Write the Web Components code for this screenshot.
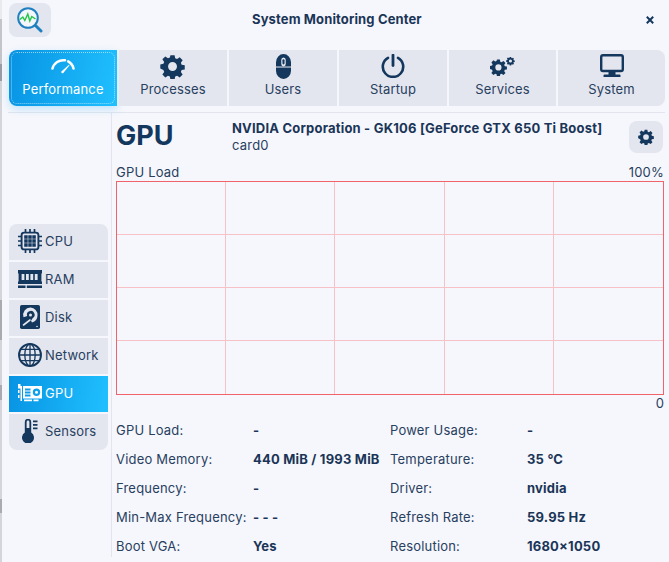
<!DOCTYPE html>
<html>
<head>
<meta charset="utf-8">
<title>System Monitoring Center</title>
<style>
html, body { margin: 0; padding: 0; height: 562px; overflow: hidden; background: #f6f7fc; }
body { font-family: Inter, "Liberation Sans", sans-serif; color: #1a3557; }
</style>
</head>
<body>
<app-window></app-window>
<script>
const COG = "M9.800 0h4.400l.6 3.300 2 .8 2.800-1.900 3.100 3.100-1.900 2.800.8 2 3.300.6v4.400l-3.300.6-.8 2 1.900 2.800-3.100 3.100-2.800-1.900-2 .8-.6 3.300H9.800l-.6-3.300-2-.8-2.800 1.900-3.100-3.100 1.900-2.800-.8-2L-.9 14.200V9.800l3.300-.6.8-2L1.300 4.400l3.100-3.100 2.800 1.900 2-.8zM12 7.300a4.700 4.700 0 1 0 0 9.400 4.700 4.700 0 0 0 0-9.400z";
const ICONS = {
  perf: `<svg viewBox="0 0 24 16" width="24" height="16"><path d="M1.500 10.500A11 11 0 0 1 14 2.300M17.200 3.400A11 11 0 0 1 22.500 10.500" fill="none" stroke="#fff" stroke-width="2.500" stroke-linecap="round"/><path d="M10.300 13.500l7.700-6.800.6.600-6.500 8a1.500 1.500 0 0 1-1.800-1.800z" fill="#fff"/></svg>`,
  gear: `<svg viewBox="0 0 24 24" width="25" height="25"><path fill="#14375d" fill-rule="evenodd" d="${COG}" transform="translate(1.100 1.100) scale(.91)"/></svg>`,
  mouse: `<svg viewBox="0 0 16 24" width="15" height="25" preserveAspectRatio="none"><path fill="#14375d" fill-rule="evenodd" d="M8 0a8 8 0 0 1 8 8v8a8 8 0 0 1-16 0V8a8 8 0 0 1 8-8zM8 3.400a2.400 2.400 0 0 0-2.400 2.400v3.800a2.400 2.400 0 0 0 4.800 0V5.800a2.400 2.400 0 0 0-2.400-2.400z"/><rect x="0" y="12" width="16" height="1" fill="#e3e6ee"/><rect x="6.900" y="5" width="2.200" height="5" rx="1.100" fill="#14375d"/></svg>`,
  power: `<svg viewBox="0 0 24 24" width="24" height="24"><path d="M7 3.800a10.200 10.200 0 1 0 10 0" fill="none" stroke="#14375d" stroke-width="2.600" stroke-linecap="round"/><path d="M12 1v10.500" stroke="#14375d" stroke-width="2.800" stroke-linecap="round"/></svg>`,
  services: `<svg viewBox="0 0 25 19" width="25" height="19"><path fill="#14375d" fill-rule="evenodd" transform="translate(.5 2.500) scale(.66)" d="${COG}"/><path fill="#14375d" fill-rule="evenodd" transform="translate(16.500 0) scale(.33)" d="${COG}"/></svg>`,
  monitor: `<svg viewBox="0 0 24 24" width="24" height="24"><rect x="1.200" y="1.200" width="21.600" height="15.800" rx="1.800" fill="none" stroke="#14375d" stroke-width="2.400"/><path fill="#14375d" d="M8.500 18h7v2.500h-7zM4.500 20.500h15a1 1 0 0 1 1 1v1.500h-17v-1.500a1 1 0 0 1 1-1z"/></svg>`,
  cpu: `<svg viewBox="0 0 24 24" width="24" height="24" fill="none" stroke="#14375d"><rect x="3.600" y="3.600" width="16.800" height="16.800" rx="2.500" stroke-width="1.900"/><path fill="#14375d" stroke="none" d="M6.200 6.200h3.500v3.500H6.200zM10.250 6.200h3.500v3.500h-3.500zM14.300 6.200h3.500v3.500h-3.500zM6.200 10.250h3.500v3.500H6.200zM10.250 10.250h3.500v3.500h-3.500zM14.300 10.250h3.500v3.500h-3.500zM6.200 14.300h3.500v3.500H6.200zM10.250 14.300h3.500v3.500h-3.500zM14.300 14.300h3.500v3.500h-3.500z"/><path stroke-width="1.700" d="M7.500 0v3M12 0v3M16.500 0v3M7.500 21v3M12 21v3M16.500 21v3M0 7.500h3M0 12h3M0 16.500h3M21 7.500h3M21 12h3M21 16.500h3"/></svg>`,
  ram: `<svg viewBox="0 0 24 18" width="24" height="18"><path fill="#14375d" d="M0 0h24v3.600h-.6v7.800h.6V14H0v-2.600h.6V3.600H0z"/><path fill="#e3e6ee" d="M3.600 4h2.800v6H3.600zM8 4h2.800v6H8zM12.400 4h2.800v6h-2.800zM16.800 4h2.800v6h-2.800z"/><path fill="#14375d" d="M0 15.400h7.500V18H0zM8.800 15.400H24V18H8.800z"/></svg>`,
  disk: `<svg viewBox="0 0 20 24" width="20" height="24"><rect width="20" height="24" rx="1.800" fill="#14375d"/><path fill="#e3e6ee" fill-rule="evenodd" d="M10.500 2.500a7.500 7.500 0 0 1 7 8 7.500 7.500 0 0 1-5.500 7l-1-1.800 1.800-2.800a3.800 3.800 0 1 0-5.600-2L3.500 12.200A7.500 7.500 0 0 1 10.500 2.500z"/><circle cx="10.500" cy="10" r="1.500" fill="#e3e6ee"/><path stroke="#e3e6ee" stroke-width="1.600" stroke-linecap="round" d="M3.500 20L10 15"/><circle cx="17" cy="21.500" r=".8" fill="#e3e6ee"/></svg>`,
  net: `<svg viewBox="0 0 24 24" width="24" height="24" fill="none" stroke="#14375d" stroke-width="1.300"><circle cx="12" cy="12" r="11" stroke-width="1.900"/><ellipse cx="12" cy="12" rx="5.200" ry="11"/><path d="M12 1v22M1 12h22M2.600 6.300h18.800M2.600 17.700h18.800"/></svg>`,
  gpu: `<svg viewBox="0 0 24 20" width="24" height="20"><path fill="#fff" d="M0 1h2.500v2H4v15H2.500V5.500H0zM0 7h1.500v3H0zM0 12h1.500v3H0z"/><path fill="#fff" fill-rule="evenodd" d="M5 3h19v12.500H5zM7 5.500v2h5.500v-2zM7 8.500v2h5.500v-2zM7 11.500v2h5.500v-2zM18.500 5.500a3.700 3.700 0 1 0 0 7.400 3.700 3.700 0 0 0 0-7.400z"/><circle cx="18.500" cy="9.200" r="1.500" fill="#fff"/><path fill="#fff" d="M6 16.500h8v1.800H6zM15.500 16.500h5v1.800h-5z"/></svg>`,
  temp: `<svg viewBox="0 0 16 24" width="16" height="24"><path fill="#14375d" fill-rule="evenodd" d="M2.800 13.500V3a3.200 3.200 0 0 1 6.400 0v10.500a6 6 0 1 1-6.400 0zM4.600 3v6h2.800V3a1.400 1.400 0 0 0-2.800 0z"/><path fill="#14375d" d="M11 1.500h4.500v1.700H11zM11 5h4.500v1.700H11zM11 8.500h4.500v1.700H11z"/></svg>`
};

class AppLogo extends HTMLElement {
  constructor() {
    super();
    this.attachShadow({mode: "open"}).innerHTML = `
      <style>
        :host { display: flex; width: 42px; height: 34px; background: #e3e6ee; border-radius: 8px; align-items: center; justify-content: center; }
      </style>
      <svg viewBox="0 0 26 26" width="26" height="26">
        <circle cx="11" cy="11" r="9.800" fill="#f3f6fb" stroke="#1f80c0" stroke-width="2"/>
        <path d="M18.500 18.500l5.500 5.500" stroke="#1f80c0" stroke-width="3" stroke-linecap="round"/>
        <path d="M2.800 12.500l3-2.500 2 3.500 3-6.500 2 7 2-4.500 3.700 2.500" fill="none" stroke="#22c545" stroke-width="1.400"/>
      </svg>`;
  }
}
customElements.define("app-logo", AppLogo);

class TitleBar extends HTMLElement {
  constructor() {
    super();
    this.attachShadow({mode: "open"}).innerHTML = `
      <style>
        :host { display: grid; grid-template-columns: 243px auto 1fr; align-items: center; height: 34px; padding: 3px 15px 0 9px; }
        .title { font-size: 13px; font-weight: 700; color: #1a3557; letter-spacing: .13px; padding-bottom: 2px; }
        .close { justify-self: end; display: block; }
      </style>
      <app-logo></app-logo>
      <div class="title"><slot></slot></div>
      <svg class="close" viewBox="0 0 8 8" width="8" height="8"><path d="M.8.8l6.400 6.400M7.200.8L.8 7.200" stroke="#14375d" stroke-width="2"/></svg>`;
  }
}
customElements.define("title-bar", TitleBar);

class TabButton extends HTMLElement {
  constructor() {
    super();
    this.attachShadow({mode: "open"}).innerHTML = `
      <style>
        :host { display: flex; flex-direction: column; align-items: center; height: 56px; background: #e3e6ee; color: #28405f; font-size: 13px; box-sizing: border-box; position: relative; }
        .ic { height: 26px; margin-top: 3px; display: flex; align-items: center; justify-content: center; }
        :host([icon="gear"]) .ic { margin-right: 2px; }
        :host([active]) { background: linear-gradient(100deg, #0793e3, #20c0ff); color: #fff; box-shadow: 0 3px 8px rgba(32,170,250,.25); }
        :host([active])::after { content: ""; position: absolute; inset: 2px; border: 1px dotted rgba(255,255,255,.55); border-radius: 6px; }
        :host(:first-child) { border-radius: 8px 0 0 8px; }
        :host(:last-child) { border-radius: 0 8px 8px 0; }
        .lb { line-height: 16px; margin-top: 2px; letter-spacing: .15px; }
      </style>
      <div class="ic" id="ic"></div>
      <div class="lb"><slot></slot></div>`;
  }
  connectedCallback() {
    this.shadowRoot.getElementById("ic").innerHTML = ICONS[this.getAttribute("icon")];
  }
}
customElements.define("tab-button", TabButton);

class TabBar extends HTMLElement {
  constructor() {
    super();
    this.attachShadow({mode: "open"}).innerHTML = `
      <style>
        :host { display: grid; grid-template-columns: 108px 108px 108px 108px 107px 107px; gap: 2px; margin: 13px 4px 0 9px; }
      </style>
      <slot></slot>`;
  }
}
customElements.define("tab-bar", TabBar);

class SideButton extends HTMLElement {
  constructor() {
    super();
    this.attachShadow({mode: "open"}).innerHTML = `
      <style>
        :host { display: flex; align-items: center; height: 36px; box-sizing: border-box; padding-bottom: 2px; background: #e3e6ee; color: #28405f; font-size: 13px; letter-spacing: .2px; }
        :host(:first-child) { border-radius: 8px 8px 0 0; }
        :host(:last-child) { border-radius: 0 0 8px 8px; }
        :host([active]) { background: linear-gradient(100deg, #0793e3, #20c0ff); color: #fff; }
        .ic { width: 24px; margin-left: 9px; margin-right: 3px; display: flex; justify-content: center; }
      </style>
      <div class="ic" id="ic"></div>
      <slot></slot>`;
  }
  connectedCallback() {
    this.shadowRoot.getElementById("ic").innerHTML = ICONS[this.getAttribute("icon")];
  }
}
customElements.define("side-button", SideButton);

class SideBar extends HTMLElement {
  constructor() {
    super();
    this.attachShadow({mode: "open"}).innerHTML = `
      <style>
        :host { display: flex; flex-direction: column; justify-content: center; gap: 2px; width: 99px; margin-left: 9px; margin-right: 3px; padding-bottom: 2px; }
      </style>
      <slot></slot>`;
  }
}
customElements.define("side-bar", SideBar);

class LoadChart extends HTMLElement {
  constructor() {
    super();
    const v = [1,2,3,4].map(i => `<i style="grid-column:${i};grid-row:1/5"></i>`).join("");
    const h = [1,2,3].map(i => `<b style="grid-row:${i};grid-column:1/6"></b>`).join("");
    this.attachShadow({mode: "open"}).innerHTML = `
      <style>
        :host { display: grid; flex: none; grid-template-columns: repeat(5, 1fr); grid-template-rows: repeat(4, 1fr); height: 214px; box-sizing: border-box; border: 1px solid #f0636b; background: #f6f7fc; }
        i { border-right: 1px solid #f6c2c7; }
        b { border-bottom: 1px solid #f6c2c7; }
      </style>${v}${h}`;
  }
}
customElements.define("load-chart", LoadChart);

class InfoRow extends HTMLElement {
  constructor() {
    super();
    this.attachShadow({mode: "open"}).innerHTML = `
      <style>
        :host { display: grid; grid-template-columns: var(--label-w, 137px) auto; height: 29px; align-items: center; font-size: 13px; color: #28405f; white-space: nowrap; letter-spacing: .2px; }
        .v { font-weight: 700; color: #1a3557; }
      </style>
      <div><slot name="label"></slot></div>
      <div class="v"><slot name="value"></slot></div>`;
  }
}
customElements.define("info-row", InfoRow);

class GpuPanel extends HTMLElement {
  constructor() {
    super();
    this.attachShadow({mode: "open"}).innerHTML = `
      <style>
        :host { display: flex; flex-direction: column; flex: 1; min-width: 0; border-left: 1px solid #e2e5ee; padding: 4px 5px 0 4px; margin-bottom: 5px; }
        .head { display: flex; flex: none; height: 45px; align-items: flex-start; }
        h1 { margin: 0; font-size: 27px; font-weight: 700; line-height: 38px; width: 116px; color: #14375d; }
        .dev { flex: 1; font-size: 13px; line-height: 17px; color: #28405f; padding-top: 3px; letter-spacing: .2px; }
        .dev strong { display: block; color: #1a3557; }
        .cog { width: 34px; height: 32px; background: #e3e6ee; border-radius: 8px; display: flex; align-items: center; justify-content: center; margin: 4px 1px 0 0; }
        .cap { display: flex; flex: none; justify-content: space-between; font-size: 13px; line-height: 16px; color: #28405f; height: 16px; margin-top: 2px; margin-bottom: 1px; letter-spacing: .2px; }
        .zero { flex: none; text-align: right; font-size: 13px; line-height: 16px; height: 16px; color: #28405f; }
        .info { display: grid; flex: none; grid-template-columns: 274px auto; margin-top: 4px; }
      </style>
      <div class="head">
        <h1>GPU</h1>
        <div class="dev"><strong>NVIDIA Corporation - GK106 [GeForce GTX 650 Ti Boost]</strong>card0</div>
        <div class="cog">${ICONS.gear.replace('width="25" height="25"', 'width="16" height="16"')}</div>
      </div>
      <div class="cap"><span>GPU Load</span><span>100%</span></div>
      <load-chart></load-chart>
      <div class="zero">0</div>
      <div class="info">
        <info-row><span slot="label">GPU Load:</span><span slot="value">-</span></info-row>
        <info-row><span slot="label">Power Usage:</span><span slot="value">-</span></info-row>
        <info-row><span slot="label">Video Memory:</span><span slot="value">440 MiB / 1993 MiB</span></info-row>
        <info-row><span slot="label">Temperature:</span><span slot="value">35 °C</span></info-row>
        <info-row><span slot="label">Frequency:</span><span slot="value">-</span></info-row>
        <info-row><span slot="label">Driver:</span><span slot="value">nvidia</span></info-row>
        <info-row><span slot="label">Min-Max Frequency:</span><span slot="value">- - -</span></info-row>
        <info-row><span slot="label">Refresh Rate:</span><span slot="value">59.95 Hz</span></info-row>
        <info-row><span slot="label">Boot VGA:</span><span slot="value">Yes</span></info-row>
        <info-row><span slot="label">Resolution:</span><span slot="value">1680×1050</span></info-row>
      </div>`;
  }
}
customElements.define("gpu-panel", GpuPanel);

class AppWindow extends HTMLElement {
  constructor() {
    super();
    this.attachShadow({mode: "open"}).innerHTML = `
      <style>
        :host { display: flex; flex-direction: column; height: 562px; width: 669px; box-sizing: border-box; background: #f6f7fc; font-family: Inter, "Liberation Sans", sans-serif; border-left: 2px solid #d3d5da; border-image: linear-gradient(to bottom, #e9eaee 0 20px, #c3c5ca 20px 65px, #9a9da5 65px 82px, #d3d5da 82px 300px, #a9abb1 300px 340px, #d3d5da 340px 385px, #a9abb1 385px 400px, #d3d5da 400px 498px, #a9abb1 498px 512px, #d3d5da 512px) 1; }
        .rule { height: 1px; background: #e2e5ee; margin: 6px 4px 0 6px; }
        .main { flex: 1; display: flex; min-height: 0; }
        title-bar { padding-left: 7px; }
        tab-bar { margin-left: 7px; }
        side-bar { margin-left: 7px; }
      </style>
      <title-bar>System Monitoring Center</title-bar>
      <tab-bar>
        <tab-button icon="perf" active>Performance</tab-button>
        <tab-button icon="gear">Processes</tab-button>
        <tab-button icon="mouse">Users</tab-button>
        <tab-button icon="power">Startup</tab-button>
        <tab-button icon="services">Services</tab-button>
        <tab-button icon="monitor">System</tab-button>
      </tab-bar>
      <div class="rule"></div>
      <div class="main">
        <side-bar>
          <side-button icon="cpu">CPU</side-button>
          <side-button icon="ram">RAM</side-button>
          <side-button icon="disk">Disk</side-button>
          <side-button icon="net">Network</side-button>
          <side-button icon="gpu" active>GPU</side-button>
          <side-button icon="temp">Sensors</side-button>
        </side-bar>
        <gpu-panel></gpu-panel>
      </div>`;
  }
}
customElements.define("app-window", AppWindow);
</script>
</body>
</html>
